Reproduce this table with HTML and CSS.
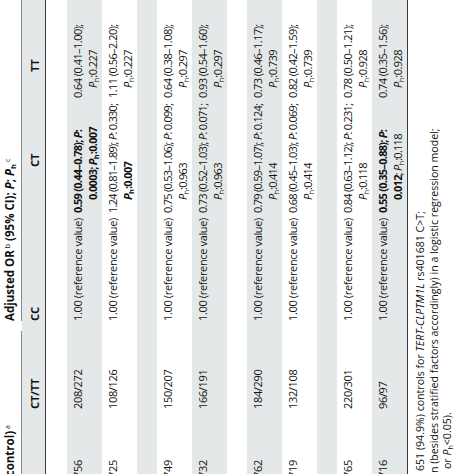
FILE: index.html
```html
<!DOCTYPE html>
<html>
<head>
<meta charset="utf-8">
<link rel="stylesheet" href="styles.css">
</head>
<body>
<div class="page">
  <div class="rot">
    <div class="tbl">
      <div class="hr1">
        <div class="hc">/control)<sup>a</sup></div>
        <div class="hc">Adjusted OR<sup>b</sup> (95% CI); <i>P</i>; <i>P</i><sub>h</sub><sup>c</sup></div>
      </div>
      <div class="hr2 cols">
        <div></div>
        <div>CT/TT</div>
        <div>CC</div>
        <div class="hct">CT</div>
        <div class="htt">TT</div>
      </div>
      <div class="tbody">
        <div class="grp first"></div>
        <div class="row cols">
          <div>756</div><div>208/272</div><div>1.00 (reference value)</div>
          <div class="d"><b>0.59 (0.44–0.78); <i>P</i>:</b><br><b>0.0003; <i>P</i><sub>h</sub>:0.007</b></div>
          <div class="e">0.64 (0.41–1.00);<br><i>P</i><sub>h</sub>:0.227</div>
        </div>
        <div class="row cols">
          <div>725</div><div>108/126</div><div>1.00 (reference value)</div>
          <div class="d">1.24 (0.81–1.89); <i>P</i>: 0.330;<br><b><i>P</i><sub>h</sub>:0.007</b></div>
          <div class="e">1.11 (0.56–2.20);<br><i>P</i><sub>h</sub>:0.227</div>
        </div>
        <div class="grp"></div>
        <div class="row cols">
          <div>749</div><div>150/207</div><div>1.00 (reference value)</div>
          <div class="d">0.75 (0.53–1.06); <i>P</i>: 0.099;<br><i>P</i><sub>h</sub>:0.963</div>
          <div class="e">0.64 (0.38–1.08);<br><i>P</i><sub>h</sub>:0.297</div>
        </div>
        <div class="row cols">
          <div>732</div><div>166/191</div><div>1.00 (reference value)</div>
          <div class="d">0.73 (0.52–1.03); <i>P</i>: 0.071;<br><i>P</i><sub>h</sub>:0.963</div>
          <div class="e">0.93 (0.54–1.60);<br><i>P</i><sub>h</sub>:0.297</div>
        </div>
        <div class="grp"></div>
        <div class="row cols">
          <div>762</div><div>184/290</div><div>1.00 (reference value)</div>
          <div class="d">0.79 (0.59–1.07); <i>P</i>: 0.124;<br><i>P</i><sub>h</sub>:0.414</div>
          <div class="e">0.73 (0.46–1.17);<br><i>P</i><sub>h</sub>:0.739</div>
        </div>
        <div class="row cols">
          <div>719</div><div>132/108</div><div>1.00 (reference value)</div>
          <div class="d">0.68 (0.45–1.03); <i>P</i>: 0.069;<br><i>P</i><sub>h</sub>:0.414</div>
          <div class="e">0.82 (0.42–1.59);<br><i>P</i><sub>h</sub>:0.739</div>
        </div>
        <div class="grp"></div>
        <div class="row cols">
          <div>765</div><div>220/301</div><div>1.00 (reference value)</div>
          <div class="d">0.84 (0.63–1.12); <i>P</i>: 0.231;<br><i>P</i><sub>h</sub>:0.118</div>
          <div class="e">0.78 (0.50–1.21);<br><i>P</i><sub>h</sub>:0.928</div>
        </div>
        <div class="row cols">
          <div>716</div><div>96/97</div><div>1.00 (reference value)</div>
          <div class="d"><b>0.55 (0.35–0.88); <i>P</i>:</b><br><b>0.012</b>; <i>P</i><sub>h</sub>:0.118</div>
          <div class="e">0.74 (0.35–1.56);<br><i>P</i><sub>h</sub>:0.928</div>
        </div>
      </div>
    </div>
    <div class="fn">
      <div class="fl1">651 (94.9%) controls for <i>TERT-CLPTM1L</i> rs401681 C&gt;T;</div>
      <div class="fl2">n (besides stratified factors accordingly) in a logistic regression model;</div>
      <div class="fl3">or <i>P</i><sub>h</sub>&lt;0.05).</div>
    </div>
  </div>
</div>
</body>
</html>
```
FILE: styles.css
```css
html, body {
  margin: 0;
  padding: 0;
  background: #fff;
}
.page {
  width: 474px;
  height: 474px;
  overflow: hidden;
}
.rot {
  width: 474px;
  height: 474px;
  overflow: hidden;
  background: #fff;
  transform: rotate(-90deg);
  font-family: "Open Sans", "Liberation Sans", sans-serif;
  color: #111;
}
.tbl {
  margin-left: -4px;
  width: 540px;
  font-size: 11px;
  letter-spacing: -0.35px;
  line-height: 15px;
  border-bottom: 1px solid #3a3a3a;
}
.tbl, .fn {
  white-space: nowrap;
}
sup {
  font-size: 7px;
  line-height: 0;
  vertical-align: 4px;
  font-weight: 400;
  margin-left: 2px;
  letter-spacing: 0;
}
sub {
  font-size: 7.5px;
  line-height: 0;
  vertical-align: -2px;
  letter-spacing: 0;
}
.hr1 {
  display: grid;
  grid-template-columns: 147px 1fr;
  column-gap: 10px;
}
.hc {
  height: 19px;
  padding-top: 2px;
  border-bottom: 1px solid #8a8a8a;
  font-weight: 700;
  font-size: 11.5px;
  letter-spacing: 0;
}
.hc:first-child {
  margin-left: -3px;
}
.cols {
  display: grid;
  grid-template-columns: 69px 88px 108px 115px 1fr;
}
.hr2 {
  box-sizing: border-box;
  height: 24px;
  padding-top: 5px;
  background: #e5e8e8;
  border-bottom: 1px solid #3a3a3a;
  font-weight: 700;
  font-size: 11.2px;
  letter-spacing: -0.2px;
}
.hct {
  padding-left: 46px;
}
.htt {
  padding-left: 26px;
}
.grp {
  height: 20px;
}
.grp.first {
  height: 21px;
}
.row {
  box-sizing: border-box;
  height: 35px;
  padding-top: 3px;
}
.tbody > div:nth-child(even) {
  background: #e5e8e8;
}
.d {
  padding-left: 13px;
  text-indent: -13px;
  letter-spacing: -0.72px;
}
.e {
  padding-left: 10px;
  text-indent: -10px;
  letter-spacing: -0.55px;
}
.fn {
  padding-top: 6px;
  font-size: 10.6px;
  line-height: 13.5px;
  color: #111;
}
.fn sub {
  font-size: 7px;
}
.fl1 {
  padding-left: 3px;
}
.fl2 {
  padding-left: 1px;
}
.fl3 {
  padding-left: 5px;
}
```
